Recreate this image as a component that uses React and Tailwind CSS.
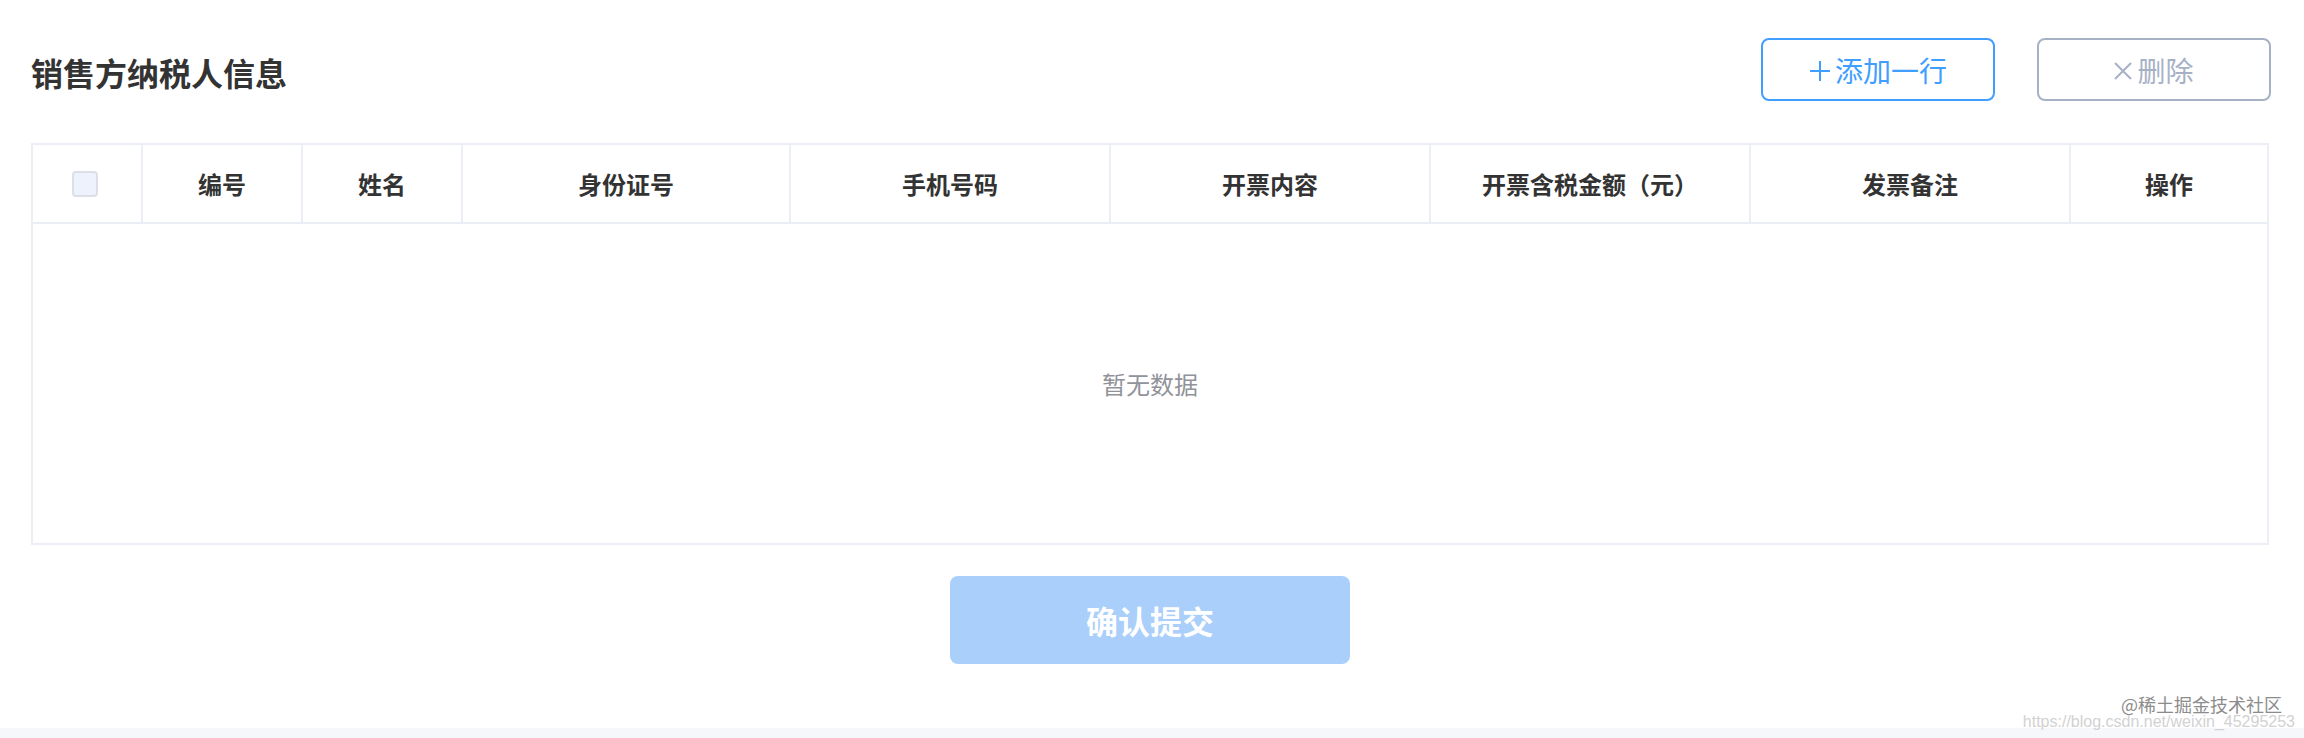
import React from "react";

const columns = ["编号", "姓名", "身份证号", "手机号码", "开票内容", "开票含税金额（元）", "发票备注", "操作"];

const App = () => {
  return (
    <div
      className="relative flex h-[738px] w-[2304px] flex-col overflow-hidden bg-white"
      style={{ fontFamily: '"Noto Sans CJK SC", "Noto Sans", sans-serif' }}
    >
      <div className="flex-1 pl-[31px] pt-[38px]">
        <div className="w-[2238px]">
          <div className="-mr-[2px] flex h-[63px] items-center justify-between">
            <h1 className="mt-[4px] text-[32px] font-bold leading-none text-[#333]">销售方纳税人信息</h1>
            <div className="flex gap-[42px]">
              <button className="flex h-[63px] w-[234px] items-center justify-center gap-[4px] rounded-[8px] border-2 border-[#409eff] text-[28px] leading-none text-[#409eff]">
                <svg width="22" height="22" viewBox="0 0 22 22" className="mt-[2px]">
                  <path d="M11 1v20M1 11h20" stroke="currentColor" strokeWidth="2" fill="none" />
                </svg>
                <span>添加一行</span>
              </button>
              <button className="flex h-[63px] w-[234px] items-center justify-center gap-[5px] rounded-[8px] border-2 border-[#a7b1c6] text-[28px] leading-none text-[#a7b1c6]">
                <svg width="18" height="18" viewBox="0 0 18 18" className="mt-[2px]">
                  <path d="M1 1l16 16M17 1L1 17" stroke="currentColor" strokeWidth="2" fill="none" />
                </svg>
                <span>删除</span>
              </button>
            </div>
          </div>

          <div className="mt-[42px] border-2 border-[#ebeef5]">
            <div className="grid h-[79px] grid-cols-[110px_160px_160px_328px_320px_320px_320px_320px_1fr] border-b-2 border-[#ebeef5]">
              <div className="flex items-center justify-center border-r-2 border-[#ebeef5]">
                <span className="mr-[4px] h-[26px] w-[26px] rounded-[4px] border-2 border-[#dcdfe6] bg-[#edf2fc]" />
              </div>
              {columns.map((c, i) => (
                <div
                  key={c}
                  className={
                    "flex items-center justify-center text-[24px] font-bold text-[#333] " +
                    (i < columns.length - 1 ? "border-r-2 border-[#ebeef5]" : "")
                  }
                >
                  {c}
                </div>
              ))}
            </div>
            <div className="flex h-[319px] items-center justify-center text-[24px] text-[#909399]">
              暂无数据
            </div>
          </div>

          <div className="mt-[31px] flex justify-center">
            <button className="flex h-[88px] w-[400px] items-center justify-center rounded-[8px] bg-[#aacffa] text-[32px] font-bold text-white">
              确认提交
            </button>
          </div>
        </div>
      </div>
      <div className="h-[10px] bg-[#f5f7fa]" />

      <div className="absolute right-[22px] top-[695px] text-[18px] leading-none text-[#8c8c8c]">@稀土掘金技术社区</div>
      <div
        className="absolute right-[9px] top-[714px] text-[16px] leading-none text-[#d2d2d2]"
        style={{ fontFamily: '"Liberation Sans", Arial, sans-serif' }}
      >
        https://blog.csdn.net/weixin_45295253
      </div>
    </div>
  );
};

export default App;
